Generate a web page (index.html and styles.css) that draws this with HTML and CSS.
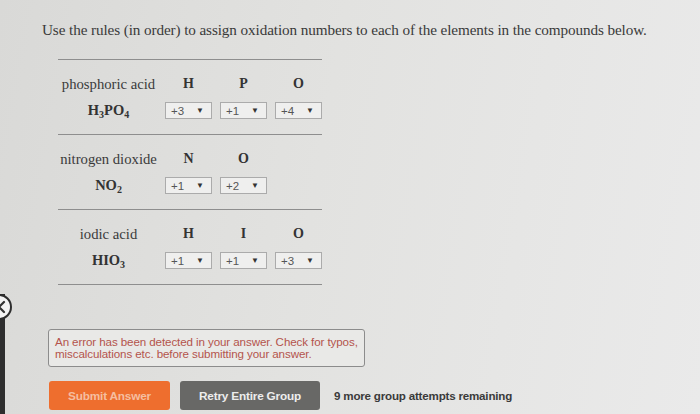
FILE: index.html
```html
<!DOCTYPE html>
<html>
<head>
<meta charset="utf-8">
<link rel="stylesheet" href="styles.css">
</head>
<body>
<div class="page">
  <p class="intro">Use the rules (in order) to assign oxidation numbers to each of the elements in the compounds below.</p>

  <div class="compounds">
    <div class="compound">
      <div class="name">phosphoric acid</div>
      <div class="el">H</div>
      <div class="el">P</div>
      <div class="el">O</div>
      <div class="formula">H<sub>3</sub>PO<sub>4</sub></div>
      <div class="select"><span>+3</span><span class="arrow">&#9660;</span></div>
      <div class="select"><span>+1</span><span class="arrow">&#9660;</span></div>
      <div class="select"><span>+4</span><span class="arrow">&#9660;</span></div>
    </div>
    <div class="compound">
      <div class="name">nitrogen dioxide</div>
      <div class="el">N</div>
      <div class="el">O</div>
      <div class="el"></div>
      <div class="formula">NO<sub>2</sub></div>
      <div class="select"><span>+1</span><span class="arrow">&#9660;</span></div>
      <div class="select"><span>+2</span><span class="arrow">&#9660;</span></div>
      <div></div>
    </div>
    <div class="compound">
      <div class="name">iodic acid</div>
      <div class="el">H</div>
      <div class="el">I</div>
      <div class="el">O</div>
      <div class="formula">HIO<sub>3</sub></div>
      <div class="select"><span>+1</span><span class="arrow">&#9660;</span></div>
      <div class="select"><span>+1</span><span class="arrow">&#9660;</span></div>
      <div class="select"><span>+3</span><span class="arrow">&#9660;</span></div>
    </div>
  </div>

  <div class="error">An error has been detected in your answer. Check for typos, miscalculations etc. before submitting your answer.</div>

  <div class="actions">
    <button class="btn submit">Submit Answer</button>
    <button class="btn retry">Retry Entire Group</button>
    <span class="remaining">9 more group attempts remaining</span>
  </div>

  <div class="edge"></div>
  <div class="nav-circle"><svg width="24" height="24" viewBox="0 0 24 24"><path d="M14 7 L9 12 L14 17" fill="none" stroke="#333" stroke-width="2.2" stroke-linecap="round" stroke-linejoin="round"/></svg></div>
</div>
</body>
</html>
```

FILE: styles.css
```css
html, body {
  margin: 0;
  padding: 0;
}
body {
  width: 700px;
  height: 414px;
  overflow: hidden;
  background: linear-gradient(100deg, #d9d9d7 0%, #e2e2e0 45%, #eaeaea 100%);
  font-family: "Liberation Serif", "Times New Roman", serif;
  color: #333;
}
.page {
  position: relative;
  height: 414px;
  padding-top: 21px;
  box-sizing: border-box;
}
.intro {
  margin: 0 0 0 42px;
  font-size: 15.2px;
  line-height: 18px;
  color: #3a3a3a;
  letter-spacing: -0.1px;
  white-space: nowrap;
}
.compounds {
  margin: 20px 0 0 58px;
  width: 264px;
  border-top: 1px solid #8e8e8e;
}
.compound {
  display: grid;
  grid-template-columns: 97px 47px 47px 47px;
  grid-template-rows: 16px 17px;
  column-gap: 8px;
  row-gap: 10px;
  padding: 16px 0 15px 2px;
  border-bottom: 1px solid #8e8e8e;
  align-items: center;
}
.name {
  text-align: center;
  font-size: 14.7px;
  color: #3a3a3a;
  white-space: nowrap;
}
.el {
  text-align: center;
  font-weight: bold;
  font-size: 14px;
  color: #333;
}
.formula {
  text-align: center;
  font-weight: bold;
  font-size: 14.5px;
  color: #333;
}
.formula sub {
  font-size: 10px;
  vertical-align: -3px;
  line-height: 0;
}
.select {
  height: 17px;
  box-sizing: border-box;
  border: 1px solid #ababab;
  background: #efefee;
  display: flex;
  align-items: center;
  justify-content: space-between;
  padding: 0 7px 0 5px;
  font-family: "Liberation Sans", Arial, sans-serif;
  font-size: 11.5px;
  color: #555;
}
.arrow {
  font-size: 8px;
  color: #333;
}
.error {
  margin: 44px 0 0 48px;
  width: 317px;
  box-sizing: border-box;
  border: 1px solid #8c8c8c;
  border-radius: 3px;
  background: #e9e9e7;
  padding: 6px 3px 6px 6px;
  font-family: "Liberation Sans", Arial, sans-serif;
  font-size: 11.6px;
  line-height: 12px;
  color: #b4544c;
  letter-spacing: -0.1px;
}
.actions {
  margin: 14px 0 0 49px;
  display: flex;
  align-items: center;
  gap: 10px;
}
.btn {
  height: 29px;
  border: none;
  border-radius: 3px;
  font-family: "Liberation Sans", Arial, sans-serif;
  font-weight: bold;
  font-size: 11.8px;
  padding: 0;
  letter-spacing: -0.2px;
}
.submit {
  width: 121px;
  background: #ee6e2e;
  color: #f5bea0;
}
.retry {
  width: 140px;
  background: #686866;
  color: #ededed;
}
.remaining {
  margin-left: 4px;
  font-family: "Liberation Sans", Arial, sans-serif;
  font-weight: bold;
  font-size: 11.6px;
  color: #3a3a3a;
  letter-spacing: -0.2px;
}
.edge {
  position: absolute;
  left: 0;
  top: 294px;
  bottom: 0;
  width: 5px;
  background: #2e2e2e;
}
.nav-circle {
  position: absolute;
  left: -14px;
  top: 294px;
  width: 22px;
  height: 22px;
  border-radius: 50%;
  border: 2px solid #2e2e2e;
  background: #f4f4f4;
  display: flex;
  align-items: center;
  justify-content: flex-end;
}
.nav-circle svg {
  margin-right: -4px;
}
```
